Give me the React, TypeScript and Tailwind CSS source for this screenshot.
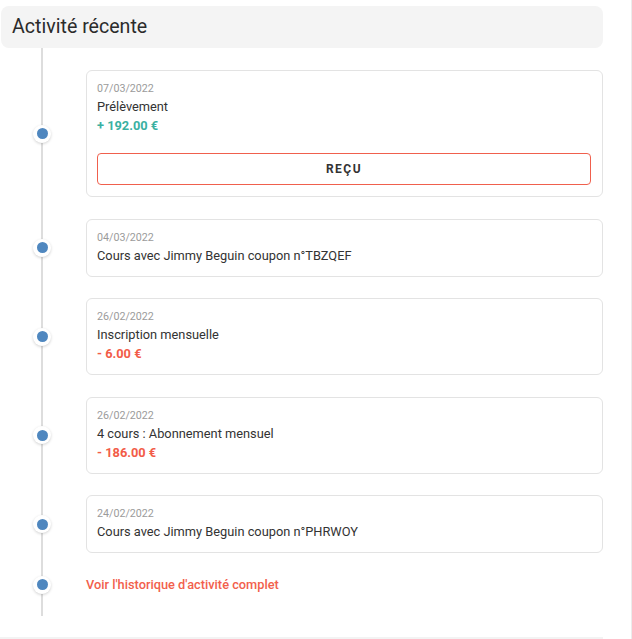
import React from "react";

type Item = {
  date: string;
  title: string;
  amount?: string;
  positive?: boolean;
  button?: boolean;
};

const items: Item[] = [
  { date: "07/03/2022", title: "Prélèvement", amount: "+ 192.00 €", positive: true, button: true },
  { date: "04/03/2022", title: "Cours avec Jimmy Beguin coupon n°TBZQEF" },
  { date: "26/02/2022", title: "Inscription mensuelle", amount: "- 6.00 €" },
  { date: "26/02/2022", title: "4 cours : Abonnement mensuel", amount: "- 186.00 €" },
  { date: "24/02/2022", title: "Cours avec Jimmy Beguin coupon n°PHRWOY" },
];

function Dot() {
  return (
    <div className="w-[86px] shrink-0 pl-[33px] flex items-center">
      <div className="w-[18px] h-[18px] rounded-full bg-white shadow-[0_1px_3px_rgba(0,0,0,0.18)] flex items-center justify-center">
        <div className="w-[11px] h-[11px] rounded-full bg-[#4f87bf]" />
      </div>
    </div>
  );
}

export default function App() {
  return (
    <div className="w-[632px] h-[639px] bg-white border-r border-[#ececec] font-['Roboto',sans-serif] text-[#333]">
      <div className="w-[603px] h-[639px] border-b-2 border-[#f3f3f3] pt-[6px]">
        <div className="ml-[1px] h-[42px] bg-[#f4f4f4] rounded-[8px] flex items-center pl-[11px]">
          <h2 className="text-[19.6px] leading-none text-[#2b2b2b]">Activité récente</h2>
        </div>
        <div className="relative pt-[22px] pb-[21px] flex flex-col gap-[21.5px]">
          <div className="absolute left-[41px] top-0 bottom-0 w-[2px] bg-[#dddddd]" />
          {items.map((it, i) => (
            <div key={i} className="relative flex items-center">
              <Dot />
              <div className="flex-1 border border-[#e3e3e3] rounded-[6px] bg-white pl-[10px] pr-[11px] pt-[10px] pb-[11px]">
                <div className="text-[10.7px] leading-[16px] text-[#9b9b9b]">{it.date}</div>
                <div className="text-[12.8px] leading-[19px] text-[#333]">{it.title}</div>
                {it.amount && (
                  <div
                    className={
                      "text-[12.8px] leading-[19px] font-bold " +
                      (it.positive ? "text-[#3ab0a2]" : "text-[#f25c48]")
                    }
                  >
                    {it.amount}
                  </div>
                )}
                {it.button && (
                  <button className="mt-[18px] w-full h-[32px] border border-[#f0604d] rounded-[4px] text-[12px] font-bold tracking-[1.5px] text-[#333] flex items-center justify-center">
                    REÇU
                  </button>
                )}
              </div>
            </div>
          ))}
          <div className="relative flex items-center">
            <Dot />
            <a className="text-[12.8px] leading-[20px] font-medium text-[#f2604c]">
              Voir l'historique d'activité complet
            </a>
          </div>
        </div>
      </div>
    </div>
  );
}
